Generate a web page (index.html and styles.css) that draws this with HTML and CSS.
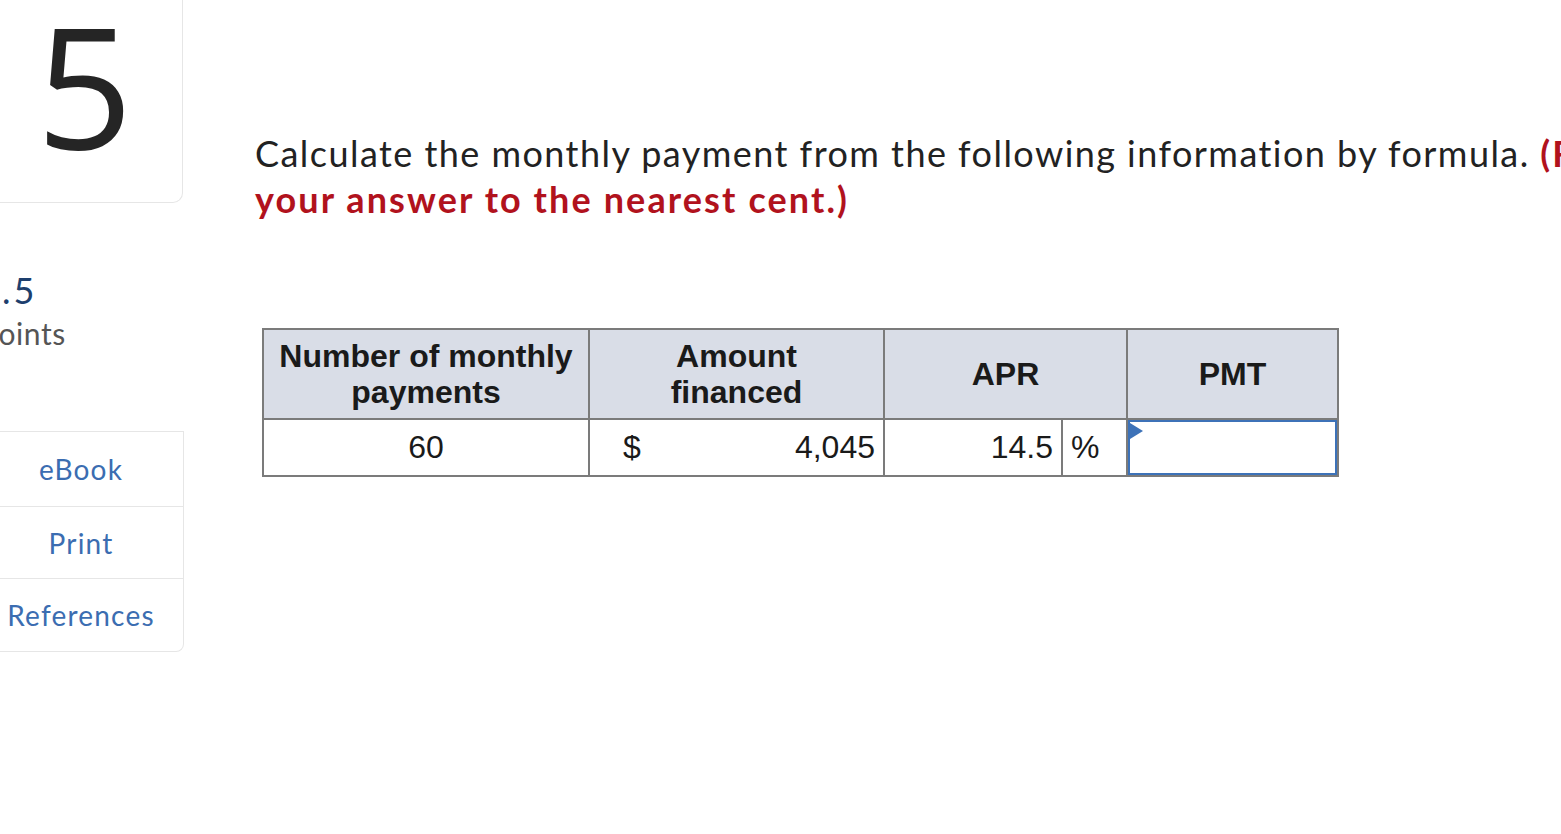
FILE: index.html
```html
<!DOCTYPE html>
<html>
<head>
<meta charset="utf-8">
<link rel="stylesheet" href="styles.css">
</head>
<body>
<div class="page">
  <aside class="sidebar">
    <div class="qnum-card"><span class="qnum">5</span></div>
    <div class="points">
      <div class="points-value">2.5</div>
      <div class="points-label">points</div>
    </div>
    <div class="tools">
      <div class="tool">eBook</div>
      <div class="tool">Print</div>
      <div class="tool">References</div>
    </div>
  </aside>
  <main class="main">
    <p class="question">Calculate the monthly payment from the following information by formula. <strong class="hint">(Round<br>your answer to the nearest cent.)</strong></p>
    <table class="grid">
      <colgroup>
        <col class="c1"><col class="c2"><col class="c3a"><col class="c3b"><col class="c4">
      </colgroup>
      <thead>
        <tr class="head">
          <th>Number of monthly<br>payments</th>
          <th>Amount<br>financed</th>
          <th colspan="2">APR</th>
          <th>PMT</th>
        </tr>
      </thead>
      <tbody>
        <tr class="data">
          <td class="center">60</td>
          <td><div class="money"><span>$</span><span>4,045</span></div></td>
          <td class="right">14.5</td>
          <td class="unit">%</td>
          <td class="answer"><div class="answer-box"><span class="flag"></span></div></td>
        </tr>
      </tbody>
    </table>
  </main>
</div>
</body>
</html>
```

FILE: styles.css
```css
html, body {
  margin: 0;
  padding: 0;
  background: #ffffff;
  overflow: hidden;
}
body {
  width: 1561px;
  height: 834px;
  font-family: Lato, "Open Sans", sans-serif;
  color: #222;
}
.page {
  display: flex;
  align-items: flex-start;
}
.sidebar {
  flex: 0 0 204px;
  width: 204px;
  margin-left: -21px;
  display: flex;
  flex-direction: column;
}
.qnum-card {
  margin-top: -20px;
  height: 223px;
  width: 204px;
  border: 1px solid #e6e6e6;
  border-radius: 0 0 10px 0;
  border-left: none;
  box-sizing: border-box;
  display: flex;
  justify-content: center;
  align-items: center;
  padding-left: 8px;
}
.qnum {
  font-family: "Open Sans", Lato, sans-serif;
  font-size: 169px;
  font-weight: 400;
  line-height: 1;
  color: #252525;
  margin-top: -16px;
}
.points {
  margin-top: 66px;
  padding-left: 0;
}
.points-value {
  font-size: 36px;
  line-height: 42px;
  letter-spacing: 3px;
  color: #1d3f6e;
  margin-left: -1px;
}
.points-label {
  font-size: 30px;
  line-height: 36px;
  letter-spacing: 0.6px;
  color: #555;
  margin-left: 2px;
  margin-top: 4px;
}
.tools {
  margin-top: 80px;
  border: 1px solid #e6e6e6;
  border-left: none;
  border-radius: 0 0 8px 0;
  width: 205px;
  box-sizing: border-box;
}
.tool {
  text-align: center;
  font-size: 28px;
  letter-spacing: 1.2px;
  color: #3b6db1;
  display: flex;
  align-items: center;
  justify-content: center;
}
.tool:nth-child(1) { height: 74px; }
.tool:nth-child(2) { height: 71px; border-top: 1px solid #e6e6e6; }
.tool:nth-child(3) { height: 72px; border-top: 1px solid #e6e6e6; }
.main {
  margin-left: 72px;
  padding-top: 130px;
}
.question {
  margin: 0;
  font-size: 36px;
  line-height: 46px;
  letter-spacing: 1.45px;
  white-space: nowrap;
  color: #222;
}
.hint {
  color: #b1121d;
  font-weight: 700;
  letter-spacing: 2.1px;
}
.grid {
  margin-top: 106px;
  margin-left: 7px;
  border-collapse: collapse;
  font-family: "Liberation Sans", Arial, sans-serif;
  font-size: 32px;
  color: #1a1a1a;
  table-layout: fixed;
}
.c1 { width: 326px; }
.c2 { width: 295px; }
.c3a { width: 178px; }
.c3b { width: 65px; }
.c4 { width: 211px; }
.grid th, .grid td {
  border: 2px solid #7b7b7b;
  padding: 0;
}
.head th {
  background: #d9dde7;
  height: 88px;
  font-weight: 700;
  line-height: 36px;
  text-align: center;
}
.data td {
  height: 55px;
  background: #fff;
}
.center { text-align: center; }
.right { text-align: right; padding-right: 8px !important; }
.unit { padding-left: 8px !important; }
.money {
  display: flex;
  justify-content: space-between;
  padding: 0 8px 0 33px;
}
.answer {
  position: relative;
}
.answer-box {
  height: 55px;
  border: 2px solid #3d72b8;
  box-sizing: border-box;
  position: relative;
}
.flag {
  position: absolute;
  left: 0;
  top: 1px;
  width: 0;
  height: 0;
  border-top: 8px solid transparent;
  border-bottom: 8px solid transparent;
  border-left: 13px solid #3d72b8;
}
```
